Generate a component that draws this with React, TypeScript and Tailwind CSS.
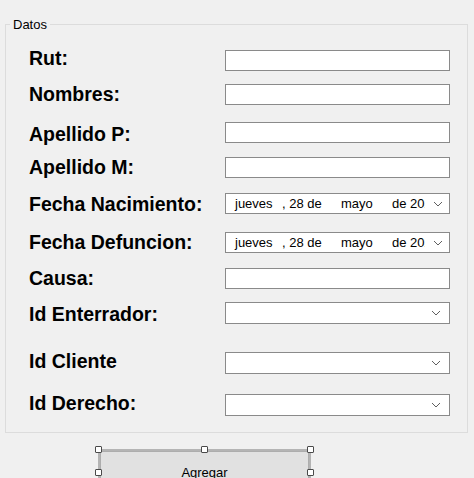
import React from "react";

type Field = {
  label: string;
  kind: "text" | "date" | "combo";
  rowClass: string;
  labelClass: string;
};

const fields: Field[] = [
  { label: "Rut:", kind: "text", rowClass: "mt-[18px] h-[21px]", labelClass: "mb-[4px]" },
  { label: "Nombres:", kind: "text", rowClass: "mt-[13px] h-[21px]", labelClass: "" },
  { label: "Apellido P:", kind: "text", rowClass: "mt-[17px] h-[21px]", labelClass: "mt-[4px]" },
  { label: "Apellido M:", kind: "text", rowClass: "mt-[14px] h-[21px]", labelClass: "mt-[1px]" },
  { label: "Fecha Nacimiento:", kind: "date", rowClass: "mt-[15px] h-[21px]", labelClass: "mt-[2px]" },
  { label: "Fecha Defuncion:", kind: "date", rowClass: "mt-[18px] h-[21px]", labelClass: "" },
  { label: "Causa:", kind: "text", rowClass: "mt-[15px] h-[21px]", labelClass: "" },
  { label: "Id Enterrador:", kind: "combo", rowClass: "mt-[13px] h-[22px]", labelClass: "mt-[4px]" },
  { label: "Id Cliente", kind: "combo", rowClass: "mt-[28px] h-[22px]", labelClass: "mb-[3px]" },
  { label: "Id Derecho:", kind: "combo", rowClass: "mt-[20px] h-[22px]", labelClass: "mb-[3px]" },
];

const Chevron: React.FC = () => (
  <svg width="10" height="6" viewBox="0 0 10 6" className="shrink-0">
    <path d="M1 1 L5 5 L9 1" fill="none" stroke="#606060" strokeWidth="1" />
  </svg>
);

const DateBox: React.FC = () => (
  <div className="flex h-full w-[225px] items-center border border-[#8a8a8a] bg-white pl-[9px] pr-[6px] text-[13px] text-black">
    <span className="w-[47px] whitespace-nowrap">jueves</span>
    <span className="w-[59px] whitespace-nowrap">, 28 de</span>
    <span className="w-[51px] whitespace-nowrap">mayo</span>
    <span className="w-[33px] overflow-hidden whitespace-nowrap">de 2026</span>
    <span className="ml-auto flex items-center">
      <Chevron />
    </span>
  </div>
);

const ComboBox: React.FC = () => (
  <div className="flex h-full w-[225px] items-center justify-end border border-[#8a8a8a] bg-white pr-[8px]">
    <Chevron />
  </div>
);

const TextBox: React.FC = () => (
  <input
    type="text"
    className="h-full w-[225px] border border-[#8a8a8a] bg-white outline-none"
  />
);

const Handle: React.FC<{ pos: string }> = ({ pos }) => (
  <div
    className={`absolute h-[7px] w-[7px] rounded-[1px] border border-[#4a4a4a] bg-white ${pos}`}
  />
);

export default function App() {
  return (
    <div
      className="h-[478px] w-[474px] overflow-hidden bg-[#f0f0f0] pt-[17px]"
      style={{ fontFamily: '"Liberation Sans", Arial, sans-serif' }}
    >
      <fieldset className="ml-[5px] h-[416px] w-[463px] border border-[#dcdcdc]">
        <legend className="ml-[4px] px-[3px] text-[13px] leading-[15px] text-black">Datos</legend>
        <div className="flex flex-col pl-[23px]">
          {fields.map((f) => (
            <div key={f.label} className={`flex items-center ${f.rowClass}`}>
              <span
                className={`w-[196px] whitespace-nowrap text-[19.5px] font-bold leading-none text-black ${f.labelClass}`}
              >
                {f.label}
              </span>
              {f.kind === "text" && <TextBox />}
              {f.kind === "date" && <DateBox />}
              {f.kind === "combo" && <ComboBox />}
            </div>
          ))}
        </div>
      </fieldset>

      <div className="relative ml-[98px] mt-[16px] h-[47px] w-[213px] border-2 border-[#b4b4b4]">
        <button className="flex h-full w-full items-center justify-center border border-[#adadad] bg-[#e1e1e1] text-[13px] text-black">
          Agregar
        </button>
        <Handle pos="-left-[5px] -top-[5px]" />
        <Handle pos="left-[101px] -top-[5px]" />
        <Handle pos="-right-[5px] -top-[5px]" />
        <Handle pos="-left-[5px] top-[18px]" />
        <Handle pos="-right-[5px] top-[18px]" />
      </div>
    </div>
  );
}
